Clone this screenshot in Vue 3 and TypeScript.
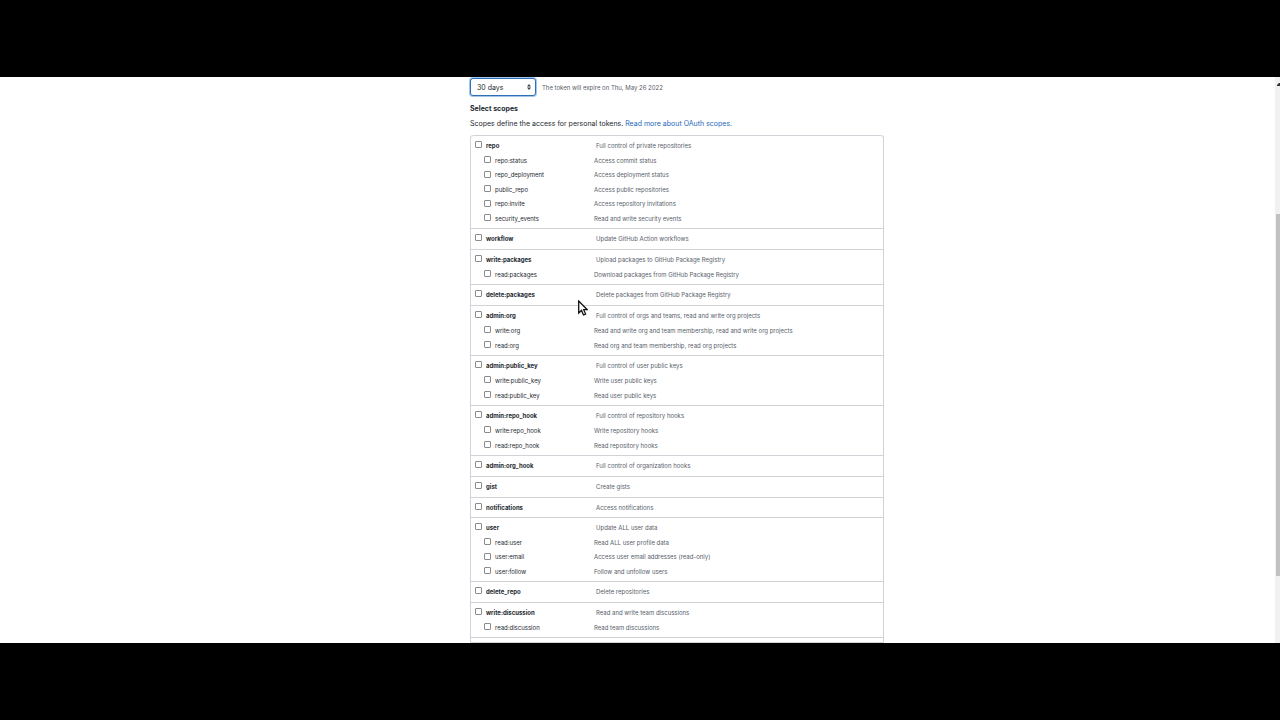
<script setup lang="ts">
import { ref } from 'vue'

interface Scope {
  name: string
  description: string
}

interface ScopeGroup extends Scope {
  children: Scope[]
}

const s = (name: string, description: string): Scope => ({ name, description })
const g = (name: string, description: string, children: Scope[] = []): ScopeGroup => ({
  name,
  description,
  children,
})

const groups: ScopeGroup[] = [
  g('repo', 'Full control of private repositories', [
    s('repo:status', 'Access commit status'),
    s('repo_deployment', 'Access deployment status'),
    s('public_repo', 'Access public repositories'),
    s('repo:invite', 'Access repository invitations'),
    s('security_events', 'Read and write security events'),
  ]),
  g('workflow', 'Update GitHub Action workflows'),
  g('write:packages', 'Upload packages to GitHub Package Registry', [
    s('read:packages', 'Download packages from GitHub Package Registry'),
  ]),
  g('delete:packages', 'Delete packages from GitHub Package Registry'),
  g('admin:org', 'Full control of orgs and teams, read and write org projects', [
    s('write:org', 'Read and write org and team membership, read and write org projects'),
    s('read:org', 'Read org and team membership, read org projects'),
  ]),
  g('admin:public_key', 'Full control of user public keys', [
    s('write:public_key', 'Write user public keys'),
    s('read:public_key', 'Read user public keys'),
  ]),
  g('admin:repo_hook', 'Full control of repository hooks', [
    s('write:repo_hook', 'Write repository hooks'),
    s('read:repo_hook', 'Read repository hooks'),
  ]),
  g('admin:org_hook', 'Full control of organization hooks'),
  g('gist', 'Create gists'),
  g('notifications', 'Access notifications'),
  g('user', 'Update ALL user data', [
    s('read:user', 'Read ALL user profile data'),
    s('user:email', 'Access user email addresses (read-only)'),
    s('user:follow', 'Follow and unfollow users'),
  ]),
  g('delete_repo', 'Delete repositories'),
  g('write:discussion', 'Read and write team discussions', [
    s('read:discussion', 'Read team discussions'),
  ]),
]

const expiration = ref('30')
const selected = ref<string[]>([])
</script>

<template>
  <div class="stage">
    <div class="page">
      <main class="container">
        <form class="content" @submit.prevent>
          <div class="expiration">
            <div class="select-wrap">
              <select v-model="expiration" aria-label="Expiration">
                <option value="30">30 days</option>
              </select>
              <svg class="arrows" viewBox="0 0 4 6" aria-hidden="true">
                <path d="M0 2.4 2 0 4 2.4ZM0 3.6 2 6 4 3.6Z" fill="#3c4146" />
              </svg>
            </div>
            <span class="note">The token will expire on Thu, May 26 2022</span>
          </div>
          <h2>Select scopes</h2>
          <p class="intro">
            Scopes define the access for personal tokens.
            <a href="#">Read more about OAuth scopes.</a>
          </p>
          <ul class="scopes">
            <li v-for="group in groups" :key="group.name" class="group" :class="{ single: !group.children.length }">
              <div class="row">
                <input :id="group.name" v-model="selected" type="checkbox" :value="group.name" />
                <label class="name" :for="group.name">{{ group.name }}</label>
                <span class="description">{{ group.description }}</span>
              </div>
              <ul v-if="group.children.length" class="children">
                <li v-for="scope in group.children" :key="scope.name" class="row child">
                  <input :id="scope.name" v-model="selected" type="checkbox" :value="scope.name" />
                  <label class="name" :for="scope.name">{{ scope.name }}</label>
                  <span class="description">{{ scope.description }}</span>
                </li>
              </ul>
            </li>
          </ul>
        </form>
      </main>
      <div class="scrollbar">
        <svg class="up" viewBox="0 0 3 3" aria-hidden="true">
          <path d="M0 3V2L2 0H3V3Z" fill="#333" />
        </svg>
        <div class="thumb"></div>
      </div>
      <svg class="pointer" viewBox="0 0 10 16" aria-hidden="true">
        <path
          d="M.7 1V13L3.5 10.4 5.5 15 7.6 14.1 5.7 9.7H9.3Z"
          fill="#fff"
          stroke="#111"
          stroke-width="1.3"
        />
      </svg>
    </div>
  </div>
</template>

<style>
body {
  background: #000;
}
</style>

<style scoped>
* {
  box-sizing: border-box;
}

.stage {
  display: flex;
  height: 100vh;
  padding: 77px 0;
  background: #000;
}

.page {
  position: relative;
  display: flex;
  flex: 1;
  overflow: hidden;
  background: #fff;
  color: #24292f;
  font-family: Inter, "Liberation Sans", Arial, sans-serif;
  font-size: 7px;
}

.container {
  display: flex;
  flex: 1;
  justify-content: center;
  padding-right: 1px;
}

.content {
  display: flex;
  flex-direction: column;
  width: 494px;
  padding: 1px 0 0 80px;
}

.expiration {
  display: flex;
  align-items: center;
  gap: 6px;
}

.select-wrap {
  position: relative;
  width: 66px;
}

select {
  display: block;
  width: 100%;
  height: 18px;
  padding: 0 6px;
  appearance: none;
  border: 1px solid #2f6fb5;
  border-radius: 3px;
  outline: 0;
  background: #fff;
  box-shadow: 0 0 0 1px #a3c6ec;
  color: #24292f;
  font: inherit;
}

.arrows {
  position: absolute;
  top: 6px;
  right: 5px;
  width: 4px;
  height: 6px;
}

.note,
.description {
  color: #57606a;
  font-size: 6px;
}

h2 {
  margin: 7px 0 0;
  font-size: 7px;
  line-height: 11px;
}

.intro {
  margin: 4px 0 0;
  line-height: 11px;
}

a {
  color: #1f68b8;
  text-decoration: none;
}

ul {
  margin: 0;
  padding: 0;
  list-style: none;
}

.scopes {
  flex: 1 0 auto;
  margin-top: 6px;
  border: 1px solid #d0d4d8;
  border-top-width: 0;
  border-radius: 3px 3px 0 0;
}

.group {
  padding: 2px 0;
  border-top: 1px solid #d0d4d8;
}

.group:first-child {
  border-radius: 3px 3px 0 0;
}

.group:last-child {
  border-bottom: 1px solid #d0d4d8;
}

.single {
  padding-bottom: 3px;
}

.single + .single + .single {
  padding-bottom: 2px;
}

.row {
  display: grid;
  grid-template-columns: 7px 106px 1fr;
  column-gap: 4px;
  align-items: center;
  height: 15px;
  padding-left: 4px;
  font-size: 6px;
  line-height: 10px;
}

.row .name {
  font-weight: 700;
}

.child {
  grid-template-columns: 7px 95px 1fr;
  padding-left: 13px;
}

.child .name {
  font-weight: 400;
}

.child:nth-child(even):not(:last-child) {
  height: 14px;
}

input {
  width: 7px;
  height: 7px;
  margin: 0 0 2px;
  appearance: none;
  border: 1px solid #8b8b8b;
  border-radius: 1px;
  background: #fff;
}

input:checked {
  background: #0969da;
}

.scrollbar {
  display: flex;
  flex-direction: column;
  width: 5px;
  padding-left: 1px;
  background: #f1f1f1;
}

.up {
  flex: none;
  align-self: flex-end;
  width: 3px;
  height: 3px;
  margin-top: 6px;
}

.thumb {
  height: 64%;
  margin-top: 128px;
  background: #c1c1c1;
}

.pointer {
  position: absolute;
  top: 223px;
  left: 578px;
  width: 10px;
  height: 16px;
}
</style>
